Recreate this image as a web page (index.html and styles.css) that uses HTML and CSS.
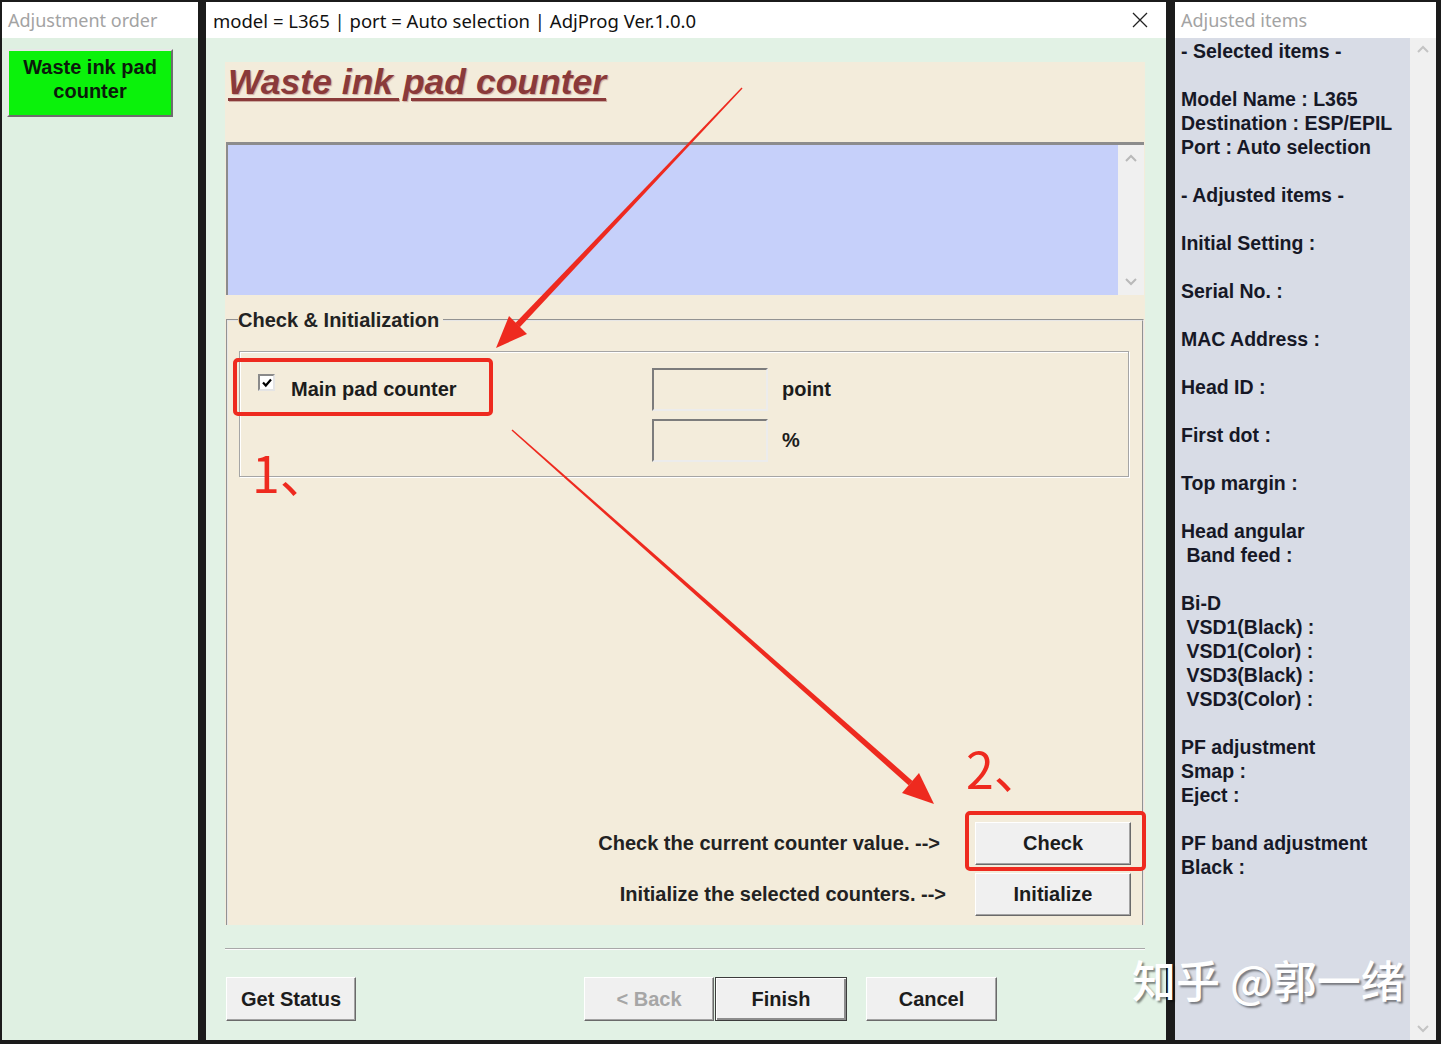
FILE: index.html
```html
<!DOCTYPE html>
<html lang="en">
  <head>
    <meta charset="UTF-8" />
    <meta name="viewport" content="width=device-width, initial-scale=1.0" />
    <title>AdjProg - Waste ink pad counter</title>
    <link rel="stylesheet" href="styles.css">
  </head>
  <body>
    <div class="desktop">
      <!-- left: adjustment order -->
      <div class="window side-left">
        <div class="titlebar faded">Adjustment order</div>
        <div class="side-body">
          <button class="step-btn">Waste ink pad<br>counter</button>
        </div>
      </div>

      <!-- main dialog -->
      <div class="window main-window">
        <div class="titlebar main-title">
          <span>model = L365 | port = Auto selection | AdjProg Ver.1.0.0</span>
          <svg class="close" width="16" height="16" viewBox="0 0 16 16">
            <path d="M1 1L15 15M15 1L1 15" stroke="#222" stroke-width="1.3" fill="none" />
          </svg>
        </div>
        <div class="main-body">
          <div class="panel">
            <h1>Waste ink pad counter</h1>
            <div class="message-box">
              <div class="message-text"></div>
              <div class="scrollbar">
                <svg width="14" height="10" viewBox="0 0 14 10"><path d="M2 8L7 3L12 8" stroke="#b9b9b9" stroke-width="2" fill="none" /></svg>
                <svg width="14" height="10" viewBox="0 0 14 10"><path d="M2 2L7 7L12 2" stroke="#b9b9b9" stroke-width="2" fill="none" /></svg>
              </div>
            </div>
            <fieldset class="group">
              <legend>Check &amp; Initialization</legend>
              <div class="counters">
                <label class="counter-check">
                  <span class="checkbox">
                    <svg width="12" height="12" viewBox="0 0 12 12"><path d="M2 5.5L4.8 8.5L10 2.5" stroke="#000" stroke-width="2.2" fill="none" /></svg>
                  </span>
                  Main pad counter
                </label>
                <div class="field"></div>
                <span class="unit">point</span>
                <div></div>
                <div class="field"></div>
                <span class="unit">%</span>
              </div>
              <div class="actions">
                <div class="action-row">
                  <span class="hint">Check the current counter value. --&gt;</span>
                  <button class="btn action-btn">Check</button>
                </div>
                <div class="action-row">
                  <span class="hint hint-init">Initialize the selected counters. --&gt;</span>
                  <button class="btn action-btn">Initialize</button>
                </div>
              </div>
            </fieldset>
          </div>
          <hr class="divider">
          <div class="nav-row">
            <button class="btn nav-btn">Get Status</button>
            <button class="btn nav-btn back" disabled>&lt; Back</button>
            <button class="btn nav-btn default">Finish</button>
            <button class="btn nav-btn cancel">Cancel</button>
          </div>
        </div>
      </div>

      <!-- right: adjusted items -->
      <div class="window side-right">
        <div class="titlebar faded">Adjusted items</div>
        <div class="summary-wrap">
          <div class="summary">- Selected items -

Model Name : L365
Destination : ESP/EPIL
Port : Auto selection

- Adjusted items -

Initial Setting :

Serial No. :

MAC Address :

Head ID :

First dot :

Top margin :

Head angular
 Band feed :

Bi-D
 VSD1(Black) :
 VSD1(Color) :
 VSD3(Black) :
 VSD3(Color) :

PF adjustment
Smap :
Eject :

PF band adjustment
Black :</div>
          <div class="scrollbar">
            <svg width="14" height="10" viewBox="0 0 14 10"><path d="M2 8L7 3L12 8" stroke="#c4c4c4" stroke-width="2" fill="none" /></svg>
            <svg width="14" height="10" viewBox="0 0 14 10"><path d="M2 2L7 7L12 2" stroke="#c4c4c4" stroke-width="2" fill="none" /></svg>
          </div>
        </div>
      </div>
    </div>

    <!-- red annotations drawn over the screenshot -->
    <div class="annotations">
      <svg class="marks" width="1441" height="1044" viewBox="0 0 1441 1044">
        <g fill="#ee2a1f">
          <polygon points="742.5,88.5 741.5,87.5 515.4,323.1 519.8,327.3" />
          <polygon points="496,348 527,334 509,316" />
          <polygon points="511.5,430.6 512.5,429.4 912.5,780.9 908.5,785.3" />
          <polygon points="934,804 902,793 919,773" />
        </g>
        <g fill="none" stroke="#ee2a1f" stroke-width="4">
          <rect x="235" y="360" width="256" height="54" rx="3" />
          <rect x="967" y="813" width="177" height="56" rx="3" />
        </g>
      </svg>
      <span class="step-no step-one">1、</span>
      <span class="step-no step-two">2、</span>
      <span class="watermark">知乎 @郭一绪</span>
    </div>
  </body>
</html>
```

FILE: styles.css
```css
* {
  margin: 0;
  padding: 0;
  box-sizing: border-box;
}
body {
  width: 1441px;
  height: 1044px;
  overflow: hidden;
  position: relative;
  background-color: #1b1b1b;
  font-family: 'Liberation Sans', Arial, sans-serif;
  color: #1c1c1c;
}
.desktop {
  display: flex;
  padding: 2px 0 0 2px;
}
.window {
  display: flex;
  flex-direction: column;
  height: 1038px;
}
.side-left {
  width: 196px;
}
.main-window {
  width: 960px;
  margin-left: 8px;
}
.side-right {
  width: 261px;
  margin-left: 9px;
}
.titlebar {
  flex-shrink: 0;
  height: 36px;
  display: flex;
  align-items: center;
  padding-left: 6px;
  background: #fff;
  font-family: 'Noto Sans', sans-serif;
  font-size: 18px;
  color: #111;
}
.titlebar.faded {
  color: #a3a3a3;
}
.main-title {
  justify-content: space-between;
  padding: 0 18px 0 7px;
  font-size: 18.5px;
}

/* left side */
.side-body {
  flex: 1;
  background: #dff0e2;
  padding: 11px 0 0 5px;
}
.step-btn {
  width: 166px;
  height: 68px;
  padding-bottom: 9px;
  background: #0bf20b;
  border: 2px solid;
  border-color: #e8e8e8 #6d6d6d #6d6d6d #e8e8e8;
  font: bold 20px/24px 'Liberation Sans', Arial, sans-serif;
  color: #0b1a0b;
}

/* main dialog */
.main-body {
  flex: 1;
  background: #e2f2e5;
  padding: 24px 21px 0 19px;
}
.panel {
  height: 863px;
  display: flex;
  flex-direction: column;
  background: #f3ecdb;
}
h1 {
  flex-shrink: 0;
  height: 80px;
  padding: 0 0 0 3px;
  font-size: 35.5px;
  line-height: 40px;
  font-style: italic;
  font-weight: bold;
  color: #8a3a3a;
  text-decoration: underline;
  text-decoration-thickness: 3px;
  text-underline-offset: 4px;
  text-shadow: 1px 1px 1px rgba(160, 90, 90, 0.45);
}
.message-box {
  flex-shrink: 0;
  height: 153px;
  margin: 0 1px;
  display: flex;
  border-top: 3px solid #8c8c8c;
  border-left: 2px solid #8c8c8c;
}
.message-text {
  flex: 1;
  background: #c6d0fa;
}
.scrollbar {
  width: 26px;
  display: flex;
  flex-direction: column;
  justify-content: space-between;
  align-items: center;
  padding: 8px 0;
  background: #f0f0f0;
}
.group {
  flex: 1;
  min-width: 0;
  margin: 14px 1px 0;
  padding: 0 11px 9px 10px;
  display: flex;
  flex-direction: column;
  border: 2px groove #e6e6e6;
  border-bottom: none;
}
.group legend {
  padding-right: 4px;
  font-size: 20px;
  line-height: 22px;
  font-weight: bold;
  color: #222;
}
.counters {
  width: 890px;
  margin: 20px 0 0 1px;
  padding: 16px 0 14px 18px;
  display: grid;
  grid-template-columns: 394px 116px auto;
  grid-template-rows: 43px 43px;
  row-gap: 8px;
  align-items: center;
  border: 1px solid #a5a5a5;
  box-shadow: inset 1px 1px 0 #fff, 1px 1px 0 #fff;
  font-size: 20px;
  font-weight: bold;
}
.counter-check {
  display: flex;
  align-items: center;
}
.checkbox {
  width: 17px;
  height: 17px;
  margin: 0 16px 14px 0;
  display: flex;
  align-items: center;
  justify-content: center;
  background: #fff;
  border: 2px solid;
  border-color: #8a8a8a #e4e4e4 #e4e4e4 #8a8a8a;
}
.field {
  height: 43px;
  border: 2px solid;
  border-color: #7c7c7c #ececec #ececec #7c7c7c;
}
.unit {
  padding-left: 14px;
}
.actions {
  margin-top: auto;
  display: flex;
  flex-direction: column;
  gap: 8px;
}
.action-row {
  display: flex;
  justify-content: flex-end;
  align-items: center;
}
.hint {
  margin-right: 35px;
  font-size: 20px;
  font-weight: bold;
  color: #222;
}
.hint-init {
  margin-right: 29px;
}
.btn {
  background: #f0f0f0;
  border: 1px solid;
  border-color: #fff #6a6a6a #6a6a6a #fff;
  box-shadow: inset -1px -1px 0 #a3a3a3;
  font: bold 20px 'Liberation Sans', Arial, sans-serif;
  color: #1c1c1c;
}
.action-btn {
  width: 156px;
  height: 43px;
}
.divider {
  margin-top: 23px;
  border: none;
  border-top: 1px solid #a8a8a8;
  border-bottom: 1px solid #fbfbfb;
}
.nav-row {
  display: flex;
  margin-top: 27px;
  padding-left: 1px;
}
.nav-btn {
  width: 130px;
  height: 44px;
}
.back {
  margin-left: 228px;
  color: #a6a6a6;
}
.default {
  width: 132px;
  margin-left: 1px;
  border-color: #3c3c3c;
  box-shadow: inset 1px 1px 0 #fff, inset -2px -2px 0 #8c8c8c;
}
.cancel {
  width: 131px;
  margin-left: 19px;
}

/* right side */
.summary-wrap {
  flex: 1;
  display: flex;
}
.summary {
  flex: 1;
  padding: 1px 0 0 6px;
  background: #d8dce6;
  white-space: pre;
  font-size: 19.5px;
  line-height: 24px;
  font-weight: bold;
  color: #161826;
}
.summary-wrap .scrollbar {
  padding: 6px 0;
}

/* annotations */
.annotations {
  position: absolute;
  top: 0;
  left: 0;
  width: 1441px;
  height: 1044px;
  pointer-events: none;
}
.marks {
  position: absolute;
  top: 0;
  left: 0;
}
.step-no {
  position: absolute;
  font-family: 'Noto Sans CJK SC', sans-serif;
  font-size: 50px;
  line-height: 1;
  color: #ee2a1f;
}
.step-one {
  left: 252px;
  top: 446px;
}
.step-two {
  left: 966px;
  top: 742px;
}
.watermark {
  position: absolute;
  left: 1132px;
  top: 953px;
  font-family: 'Noto Sans CJK SC', sans-serif;
  font-size: 44px;
  line-height: 1.2;
  font-weight: 500;
  color: #fff;
  text-shadow: 2px 2px 2px rgba(0, 0, 0, 0.45);
}
```
